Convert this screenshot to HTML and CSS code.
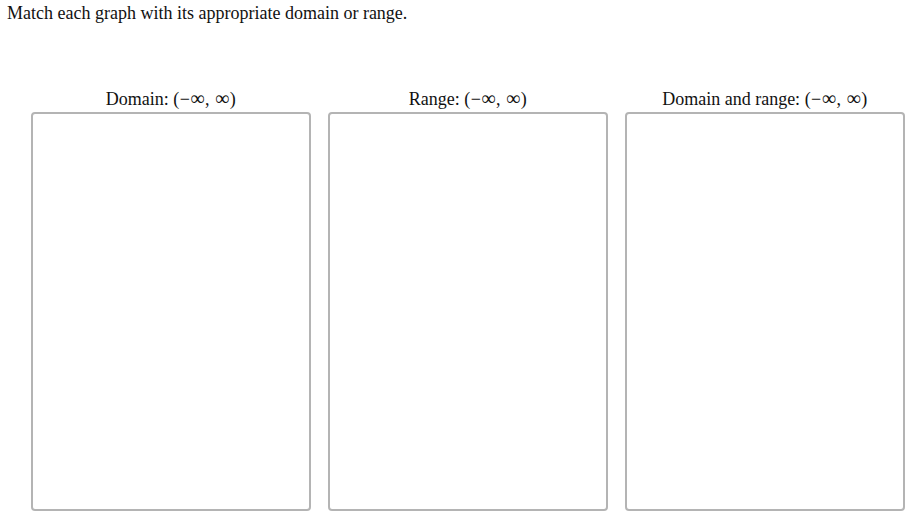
FILE: index.html
```html
<!DOCTYPE html>
<html lang="en">
<head>
    <meta charset="UTF-8">
    <meta name="viewport" content="width=device-width, initial-scale=1.0">
    <title>Domain and Range</title>
    <link rel="stylesheet" href="styles.css">
</head>
<body>
    <p class="prompt">Match each graph with its appropriate domain or range.</p>

    <div class="bins">
        <div class="bin">
            <div class="bin-label">Domain: <span class="math">(&minus;<span class="inf">&infin;</span>, <span class="inf">&infin;</span>)</span></div>
            <div class="drop-zone"></div>
        </div>
        <div class="bin">
            <div class="bin-label">Range: <span class="math">(&minus;<span class="inf">&infin;</span>, <span class="inf">&infin;</span>)</span></div>
            <div class="drop-zone"></div>
        </div>
        <div class="bin">
            <div class="bin-label">Domain and range: <span class="math">(&minus;<span class="inf">&infin;</span>, <span class="inf">&infin;</span>)</span></div>
            <div class="drop-zone"></div>
        </div>
    </div>
</body>
</html>
```

FILE: styles.css
```css
body {
    font-family: "Liberation Serif", "Times New Roman", serif;
    font-size: 18px;
    color: #111;
    margin: 0;
    padding: 0;
    background: #fff;
}
.prompt {
    margin: 0;
    padding: 3px 0 0 7px;
    line-height: 20px;
}
.bins {
    display: flex;
    gap: 17px;
    padding: 66px 0 0 31px;
}
.bin {
    width: 280px;
}
.bin-label {
    text-align: center;
    line-height: 20px;
    margin-bottom: 3px;
}
.math {
    letter-spacing: 0.5px;
}
/* infinity glyph runs a bit wider than the body text */
.inf {
    font-size: 20px;
    line-height: 0;
}
.drop-zone {
    height: 395px;
    border: 2px solid #b4b4b4;
    border-radius: 4px;
    background: #fff;
}
```
